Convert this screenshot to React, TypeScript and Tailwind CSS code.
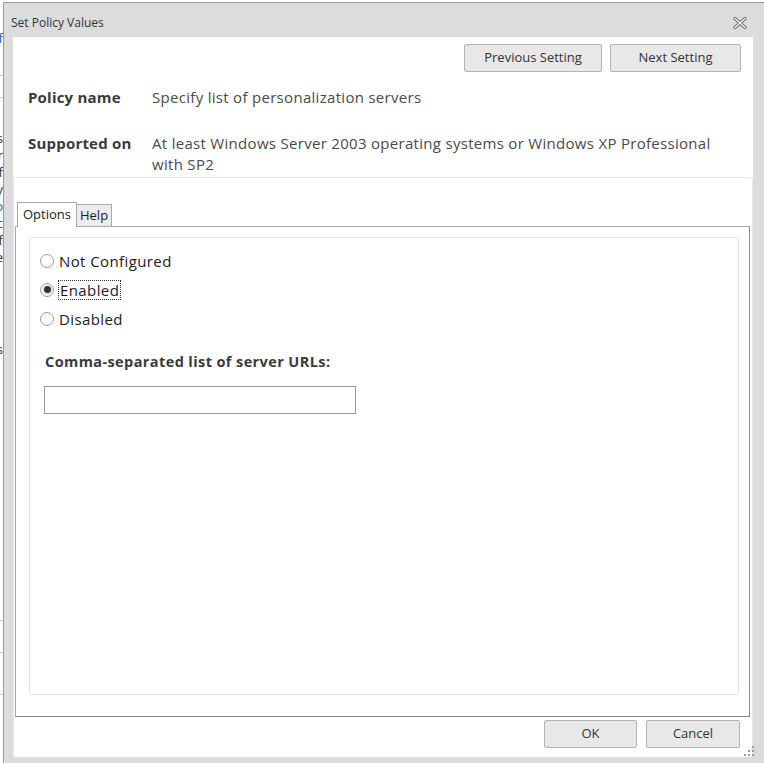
import React from "react";

const ui = "font-['Segoe_UI','Open_Sans','Noto_Sans',sans-serif]";

function Radio({ label, checked, focused }: { label: string; checked?: boolean; focused?: boolean }) {
  return (
    <div className="flex h-[29px] items-center">
      <span className="flex h-[14px] w-[14px] items-center justify-center rounded-full border border-[#9a9a9a] bg-white">
        {checked ? <span className="h-[7px] w-[7px] rounded-full bg-[#333] ring-2 ring-[#e6e6e6]" /> : null}
      </span>
      <span
        className={
          focused
            ? "ml-[4px] border border-dotted border-[#333] px-[1px] leading-[18px] tracking-[0.4px] text-[#1c1c1c]"
            : "ml-[5px] leading-[18px] tracking-[0.4px] text-[#1c1c1c]"
        }
      >
        {label}
      </span>
    </div>
  );
}

function GreyButton({ children, className }: { children: React.ReactNode; className: string }) {
  return (
    <button
      type="button"
      className={`flex h-[28px] items-center justify-center rounded-[2px] border border-[#b4b4b4] bg-[#e8e8e8] text-[13px] text-[#333] ${className}`}
    >
      {children}
    </button>
  );
}

// text of the window behind the dialog; only its last pixels show
const backdrop = [
  { y: 30, t: "Def", c: "text-[#2a5db0]" },
  { y: 130, t: "Settings", c: "text-[#333]" },
  { y: 147, t: "Server", c: "text-[#333]" },
  { y: 164, t: "Conf", c: "text-[#333]" },
  { y: 181, t: "Policy", c: "text-[#333]" },
  { y: 198, t: "Info", c: "text-[#2a5db0]" },
  { y: 215, t: "Doc", c: "text-[#2a5db0]" },
  { y: 232, t: "Ref", c: "text-[#333]" },
  { y: 249, t: "Type", c: "text-[#333]" },
  { y: 341, t: "Items", c: "text-[#333]" },
];

export default function App() {
  return (
    <div className={`flex h-[763px] w-[764px] overflow-hidden bg-white ${ui}`}>
      <div className="relative w-[3px] overflow-hidden">
        {backdrop.map((row, i) => (
          <div
            key={i}
            className="absolute right-0 flex h-[17px] w-[3px] justify-end overflow-hidden text-[13px] leading-[17px]"
            style={{ top: row.y }}
          >
            <span className={`whitespace-nowrap ${row.c}`}>{row.t}</span>
          </div>
        ))}
        <span className="absolute left-0 top-[75px] h-px w-[3px] bg-[#c8c8c8]" />
        <span className="absolute left-0 top-[97px] h-px w-[3px] bg-[#c8c8c8]" />
        <span className="absolute left-0 top-[620px] h-px w-[3px] bg-[#c8c8c8]" />
        <span className="absolute left-0 top-[652px] h-px w-[3px] bg-[#c8c8c8]" />
        <span className="absolute left-0 top-[694px] h-px w-[3px] bg-[#c8c8c8]" />
      </div>

      <div className="relative mt-[2px] flex flex-1 flex-col border-l border-t border-[#9a9a9a] bg-[#dcdcdc] pb-[6px] pr-[11px]">
        <div className="flex h-[36px] items-center justify-between pl-[7px] pr-[6px] pt-[6px]">
          <span className="text-[12px] text-[#333]">Set Policy Values</span>
          <svg width="14" height="12" viewBox="0 0 14 12">
            <path d="M2 1.5 L12 10.5 M12 1.5 L2 10.5" stroke="#6a6a6a" strokeWidth="3.2" strokeLinecap="round" />
            <path d="M2 1.5 L12 10.5 M12 1.5 L2 10.5" stroke="#f4f4f4" strokeWidth="1.4" strokeLinecap="round" />
          </svg>
        </div>

        <div className="ml-[9px] flex flex-1 flex-col bg-white">
          <div className="flex justify-end gap-[8px] pr-[12px] pt-[7px]">
            <GreyButton className="w-[138px]">Previous Setting</GreyButton>
            <GreyButton className="w-[131px]">Next Setting</GreyButton>
          </div>

          <div className="grid grid-cols-[124px_1fr] gap-y-[25px] pl-[15px] pr-[20px] pt-[15px] text-[15px] leading-[21px] tracking-[0.3px]">
            <span className="font-bold text-[#3a3a3a] tracking-[0.2px]">Policy name</span>
            <span className="text-[#4a4a4a]">Specify list of personalization servers</span>
            <span className="font-bold text-[#3a3a3a] tracking-[0.2px]">Supported on</span>
            <span className="max-w-[575px] text-[#4a4a4a]">
              At least Windows Server 2003 operating systems or Windows XP Professional with SP2
            </span>
          </div>

          <div className="mt-[2px] flex flex-1 flex-col rounded-tr-[4px] border-l border-r border-t border-[#e3e8ee] pr-[1px]">
            <div className="flex items-end pl-[3px] pt-[24px] text-[13px]">
              <div className="z-10 -mb-px flex h-[25px] items-center border-l border-r border-t border-[#a9a9a9] bg-white px-[5px] text-[#1c1c1c]">
                Options
              </div>
              <div className="flex h-[22px] items-center border-r border-t border-[#a9a9a9] bg-[#ececec] px-[3px] text-[#1c1c1c]">
                Help
              </div>
            </div>

            <div className="ml-[1px] mr-[1px] flex h-[491px] flex-col border border-[#a9a9a9] border-b-[#888] border-r-[#888] pb-[21px] pl-[13px] pr-[10px] pt-[10px]">
              <div className="flex flex-1 flex-col rounded-[3px] border border-[#dde3ea] pl-[10px] pt-[8px] text-[15px]">
                <Radio label="Not Configured" />
                <Radio label="Enabled" checked focused />
                <Radio label="Disabled" />

                <div className="ml-[5px] mt-[18px] text-[14.5px] font-bold tracking-[0.4px] text-[#3a3a3a]">
                  Comma-separated list of server URLs:
                </div>
                <input
                  type="text"
                  className="ml-[4px] mt-[13px] h-[28px] w-[312px] border border-[#9a9a9a] bg-white outline-none"
                />
              </div>
            </div>

            <div className="flex justify-end gap-[9px] pb-[9px] pr-[11px] pt-[3px]">
              <GreyButton className="w-[93px]">OK</GreyButton>
              <GreyButton className="w-[94px]">Cancel</GreyButton>
            </div>
          </div>
        </div>

        <svg width="12" height="12" viewBox="0 0 12 12" className="absolute bottom-[6px] right-[9px]">
          <rect x="9" y="1" width="2" height="2" fill="#9a9a9a" />
          <rect x="5" y="5" width="2" height="2" fill="#9a9a9a" />
          <rect x="9" y="5" width="2" height="2" fill="#9a9a9a" />
          <rect x="1" y="9" width="2" height="2" fill="#9a9a9a" />
          <rect x="5" y="9" width="2" height="2" fill="#9a9a9a" />
          <rect x="9" y="9" width="2" height="2" fill="#9a9a9a" />
        </svg>
      </div>
    </div>
  );
}
